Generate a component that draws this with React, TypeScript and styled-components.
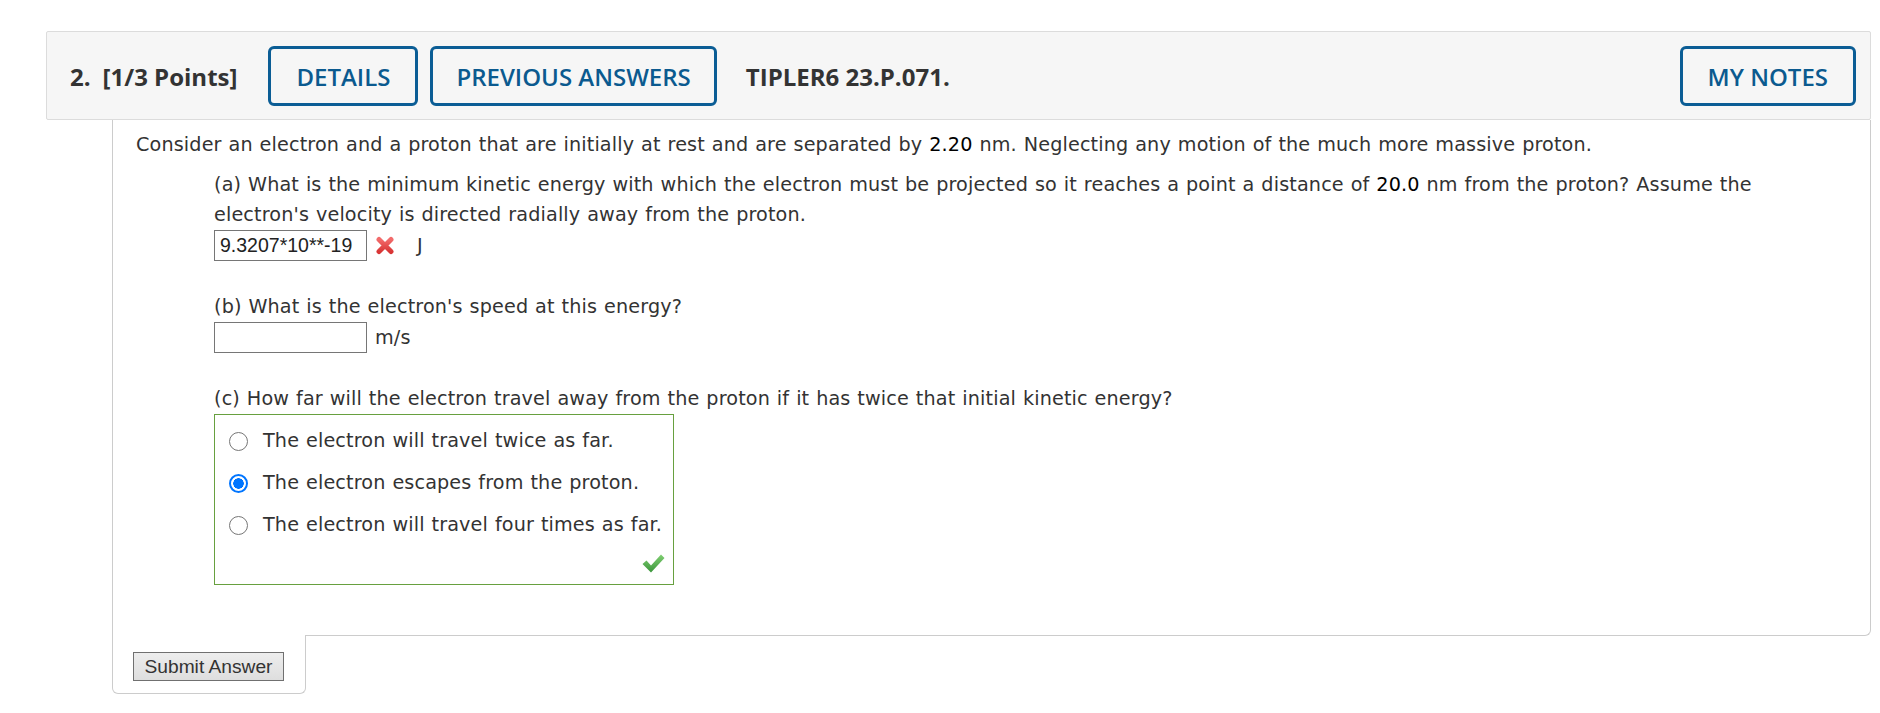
import { FC } from "react";
import styled, { createGlobalStyle } from "styled-components";

const GlobalStyle = createGlobalStyle`
  body {
    margin: 0;
    background: #fff;
    font-family: "DejaVu Sans", Verdana, sans-serif;
    color: #333;
  }
`;

interface IOption {
  label: string;
  checked?: boolean;
}

const options: IOption[] = [
  { label: "The electron will travel twice as far." },
  { label: "The electron escapes from the proton.", checked: true },
  { label: "The electron will travel four times as far." },
];

const WrongIcon: FC = () => (
  <svg width="20" height="19" viewBox="0 0 20 19">
    <defs>
      <linearGradient id="wrongFill" x1="0" y1="0" x2="0" y2="1">
        <stop offset="0" stopColor="#f26b6b" />
        <stop offset="1" stopColor="#d93636" />
      </linearGradient>
    </defs>
    <path
      d="M4 3.5 L16 15.5 M16 3.5 L4 15.5"
      stroke="url(#wrongFill)"
      strokeWidth="5"
      strokeLinecap="round"
      fill="none"
    />
  </svg>
);

const CorrectIcon: FC = () => (
  <svg width="23" height="19" viewBox="0 0 23 19">
    <defs>
      <linearGradient id="correctFill" x1="0" y1="0" x2="0" y2="1">
        <stop offset="0" stopColor="#80cf72" />
        <stop offset="1" stopColor="#3b953b" />
      </linearGradient>
    </defs>
    <path
      d="M0.5 10 L4.5 6.5 L9 11.5 L19 0.5 L22.5 4 L9 18.5 Z"
      fill="url(#correctFill)"
    />
  </svg>
);

export default function App() {
  return (
    <>
      <GlobalStyle />
      <Page>
        <Header>
          <Number>2.</Number>
          <Points>[1/3 Points]</Points>
          <OutlineButton>DETAILS</OutlineButton>
          <OutlineButton $spaced>PREVIOUS ANSWERS</OutlineButton>
          <Code>TIPLER6 23.P.071.</Code>
          <OutlineButton $right>MY NOTES</OutlineButton>
        </Header>

        <Content>
          <Intro>
            Consider an electron and a proton that are initially at rest and
            are separated by <Value>2.20</Value> nm. Neglecting any motion of
            the much more massive proton.
          </Intro>

          <Part>
            <Prompt>
              (a) What is the minimum kinetic energy with which the electron
              must be projected so it reaches a point a distance of{" "}
              <Value>20.0</Value> nm from the proton? Assume the electron's
              velocity is directed radially away from the proton.
            </Prompt>
            <AnswerRow>
              <AnswerInput readOnly value="9.3207*10**-19" />
              <Mark>
                <WrongIcon />
              </Mark>
              <Unit $wide>J</Unit>
            </AnswerRow>
          </Part>

          <Part>
            <Prompt>(b) What is the electron's speed at this energy?</Prompt>
            <AnswerRow>
              <AnswerInput readOnly value="" />
              <Unit>m/s</Unit>
            </AnswerRow>
          </Part>

          <Part $last>
            <Prompt>
              (c) How far will the electron travel away from the proton if it
              has twice that initial kinetic energy?
            </Prompt>
            <Choices>
              {options.map((option) => (
                <Choice key={option.label}>
                  <Radio $checked={!!option.checked} />
                  {option.label}
                </Choice>
              ))}
              <ChoiceStatus>
                <CorrectIcon />
              </ChoiceStatus>
            </Choices>
          </Part>
        </Content>

        <SubmitTab>
          <SubmitButton>Submit Answer</SubmitButton>
        </SubmitTab>
      </Page>
    </>
  );
}

const Page = styled.div`
  padding: 31px 9px 19px 46px;
`;

const Header = styled.div`
  display: flex;
  align-items: center;
  padding: 14px 14px 13px 23px;

  background: #f6f6f6;
  border: 1px solid #dcdcdc;
  border-radius: 2px;

  font-family: "Open Sans", sans-serif;
  font-size: 24px;
  color: #333;
`;

const Number = styled.span`
  font-weight: 700;
  margin-right: 12px;
`;

const Points = styled.span`
  font-weight: 700;
  margin-right: 31px;
`;

const Code = styled.span`
  font-weight: 700;
  margin-left: 29px;
`;

const OutlineButton = styled.button<{ $spaced?: boolean; $right?: boolean }>`
  height: 60px;
  padding: 0 ${({ $spaced }) => ($spaced ? "23px" : "25px")};
  margin-left: ${({ $spaced, $right }) =>
    $right ? "auto" : $spaced ? "12px" : "0"};

  background: transparent;
  border: 3px solid #0b5d95;
  border-radius: 6px;

  font-family: "Open Sans", sans-serif;
  font-size: 24px;
  font-weight: 600;
  color: #0b5a8f;
`;

const Content = styled.div`
  margin-left: 66px;
  padding: 10px 23px 50px 23px;

  border: 1px solid #cccccc;
  border-top: none;
  border-radius: 0 0 6px 0;

  font-size: 19.2px;
  line-height: 30px;
  letter-spacing: 0.14px;
  word-spacing: 0.65px;
`;

const Intro = styled.div`
  margin-bottom: 10px;
`;

const Value = styled.span`
  color: #000;
`;

const Part = styled.div<{ $last?: boolean }>`
  margin-left: 78px;
  margin-bottom: ${({ $last }) => ($last ? "0" : "31px")};
`;

const Prompt = styled.div``;

const AnswerRow = styled.div`
  display: flex;
  align-items: center;
  height: 31px;
`;

const AnswerInput = styled.input`
  box-sizing: border-box;
  width: 153px;
  height: 31px;
  padding: 0 5px;

  border: 1px solid #767676;
  border-radius: 0;

  font-family: "Liberation Sans", Arial, sans-serif;
  font-size: 19.5px;
  letter-spacing: 0;
  color: #222;
`;

const Mark = styled.span`
  display: flex;
  margin-left: 8px;
`;

const Unit = styled.span<{ $wide?: boolean }>`
  margin-left: ${({ $wide }) => ($wide ? "22px" : "8px")};
`;

const Choices = styled.div`
  box-sizing: border-box;
  width: 460px;
  padding: 5px 8px 11px 14px;

  border: 1px solid #67a03f;
`;

const Choice = styled.label`
  display: flex;
  align-items: center;
  gap: 15px;
  height: 42px;
  white-space: nowrap;
`;

const Radio = styled.span<{ $checked: boolean }>`
  box-sizing: border-box;
  flex: none;
  width: 19px;
  height: 19px;

  border-radius: 50%;
  border: ${({ $checked }) =>
    $checked ? "2px solid #0075ff" : "1px solid #767676"};
  background: ${({ $checked }) =>
    $checked ? "radial-gradient(circle, #0075ff 0 5px, #fff 5.5px)" : "#fff"};
`;

const ChoiceStatus = styled.div`
  display: flex;
  justify-content: flex-end;
  padding: 8px 0 0 0;
`;

const SubmitTab = styled.div`
  box-sizing: border-box;
  width: 194px;
  margin-left: 66px;
  margin-top: -1px;
  padding: 17px 0 12px 20px;

  position: relative;
  background: #fff;
  border: 1px solid #cccccc;
  border-top: none;
  border-radius: 0 0 6px 6px;
`;

const SubmitButton = styled.button`
  display: block;
  width: 151px;
  height: 29px;
  padding: 0;

  background: linear-gradient(#ededed, #dedede);
  border: 1px solid #707070;
  border-radius: 0;

  font-family: "Liberation Sans", Arial, sans-serif;
  font-size: 19.2px;
  color: #333;
`;
